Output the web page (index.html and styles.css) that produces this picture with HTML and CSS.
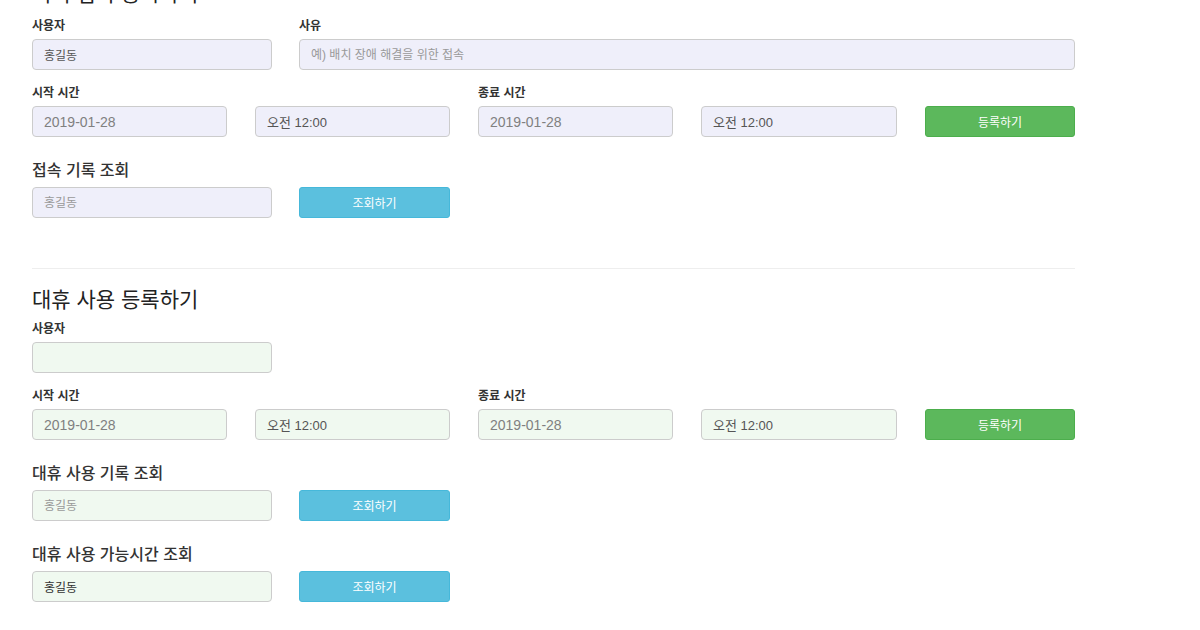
FILE: index.html
```html
<!DOCTYPE html>
<html lang="ko">
<head>
    <meta charset="UTF-8">
    <meta name="viewport" content="width=device-width, initial-scale=1.0">
    <title>접속 / 대휴 관리</title>
    <link rel="stylesheet" href="styles.css">
</head>
<body>
    <div class="page">
        <!-- Server access -->
        <section class="panel panel-access">
            <h2 class="panel-title first">서버 접속 등록하기</h2>
            <div class="form-row row-user">
                <div class="field">
                    <label>사용자</label>
                    <input class="input input-ko" type="text" value="홍길동">
                </div>
                <div class="field">
                    <label>사유</label>
                    <input class="input input-ko" type="text" placeholder="예) 배치 장애 해결을 위한 접속">
                </div>
            </div>
            <div class="form-row row-time">
                <div class="field">
                    <label>시작 시간</label>
                    <input class="input input-date" type="text" placeholder="2019-01-28">
                </div>
                <div class="field">
                    <input class="input input-time" type="text" value="오전 12:00">
                </div>
                <div class="field">
                    <label>종료 시간</label>
                    <input class="input input-date" type="text" placeholder="2019-01-28">
                </div>
                <div class="field">
                    <input class="input input-time" type="text" value="오전 12:00">
                </div>
                <div class="field">
                    <button class="btn btn-success">등록하기</button>
                </div>
            </div>
            <h3 class="lookup-title">접속 기록 조회</h3>
            <div class="form-row row-lookup">
                <input class="input input-ko" type="text" placeholder="홍길동">
                <button class="btn btn-info">조회하기</button>
            </div>
        </section>

        <hr class="divider">

        <!-- Compensatory leave -->
        <section class="panel panel-leave">
            <h2 class="panel-title">대휴 사용 등록하기</h2>
            <div class="form-row row-user">
                <div class="field">
                    <label>사용자</label>
                    <input class="input input-ko" type="text">
                </div>
            </div>
            <div class="form-row row-time">
                <div class="field">
                    <label>시작 시간</label>
                    <input class="input input-date" type="text" placeholder="2019-01-28">
                </div>
                <div class="field">
                    <input class="input input-time" type="text" value="오전 12:00">
                </div>
                <div class="field">
                    <label>종료 시간</label>
                    <input class="input input-date" type="text" placeholder="2019-01-28">
                </div>
                <div class="field">
                    <input class="input input-time" type="text" value="오전 12:00">
                </div>
                <div class="field">
                    <button class="btn btn-success">등록하기</button>
                </div>
            </div>
            <h3 class="lookup-title">대휴 사용 기록 조회</h3>
            <div class="form-row row-lookup">
                <input class="input input-ko" type="text" placeholder="홍길동">
                <button class="btn btn-info">조회하기</button>
            </div>
            <h3 class="lookup-title">대휴 사용 가능시간 조회</h3>
            <div class="form-row row-lookup">
                <input class="input input-ko input-dark" type="text" value="홍길동">
                <button class="btn btn-info">조회하기</button>
            </div>
        </section>
    </div>
</body>
</html>
```

FILE: styles.css
```css
body {
    margin: 0;
    padding: 0;
    background-color: #ffffff;
    color: #333333;
    font-family: "Liberation Sans", "Noto Sans CJK KR", sans-serif;
    overflow: hidden;
}
.page {
    width: 1043px;
    margin-left: 32px;
}
.panel-title {
    font-family: "Noto Sans CJK KR", sans-serif;
    font-size: 21px;
    font-weight: 400;
    line-height: 28px;
    margin: 0 0 8px 0;
    color: #222222;
}
.panel-title.first {
    margin-top: -22px;
    margin-bottom: 11px;
}
.form-row {
    display: grid;
    align-items: end;
    margin-bottom: 14px;
}
.row-user {
    grid-template-columns: 240px 776px;
    column-gap: 27px;
}
.row-time {
    grid-template-columns: 195px 195px 195px 196px 150px;
    column-gap: 28px;
}
.row-lookup {
    grid-template-columns: 240px 151px;
    column-gap: 27px;
}
.field {
    display: flex;
    flex-direction: column;
}
.field label {
    font-family: "Noto Sans CJK KR", sans-serif;
    font-size: 12px;
    font-weight: 700;
    line-height: 16px;
    margin-bottom: 6px;
    color: #333333;
}
.input {
    box-sizing: border-box;
    height: 31px;
    width: 100%;
    padding: 0 11px;
    border: 1px solid #cccccc;
    border-radius: 4px;
    font-family: "Liberation Sans", "Noto Sans CJK KR", sans-serif;
    color: #555555;
    outline: none;
}
.input::placeholder {
    color: #999999;
}
.panel-access .input {
    background-color: #efeffa; /* lavender */
}
.panel-leave .input {
    background-color: #f0f9f0; /* mint */
}
.input-ko {
    font-size: 12px;
}
.input-date {
    font-size: 14px;
}
.input-date::placeholder {
    color: #808080;
}
.input-time {
    font-size: 13px;
}
.input-dark {
    color: #333333;
}
.lookup-title {
    font-family: "Noto Sans CJK KR", sans-serif;
    font-size: 16px;
    font-weight: 500;
    line-height: 24px;
    margin: 20px 0 6px 0;
    color: #333333;
}
.btn {
    box-sizing: border-box;
    height: 31px;
    width: 100%;
    border-radius: 3px;
    color: #ffffff;
    font-family: "Noto Sans CJK KR", sans-serif;
    font-size: 12px;
    cursor: pointer;
}
.btn-success {
    background-color: #5cb85c;
    border: 1px solid #4cae4c;
}
.btn-info {
    background-color: #5bc0de;
    border: 1px solid #46b8da;
}
.divider {
    border: 0;
    border-top: 1px solid #eeeeee;
    margin: 50px 0 15px 0;
}
```
